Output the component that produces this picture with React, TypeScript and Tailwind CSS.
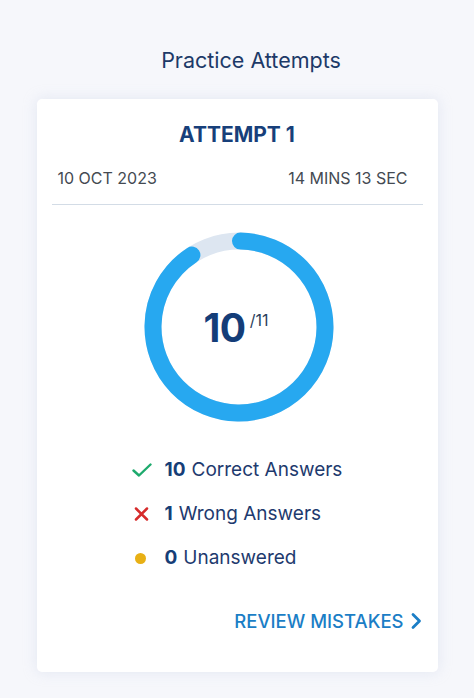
import React from 'react';

const font = { fontFamily: 'Inter, "Noto Sans", sans-serif' };

function ScoreRing({ score, total }: { score: number; total: number }) {
  const r = 86;
  const c = 2 * Math.PI * r;
  const filled = (score / total) * c;
  return (
    <div className="relative w-[192px] h-[192px]">
      <svg width="192" height="192" viewBox="0 0 192 192">
        <circle cx="96" cy="96" r={r} fill="none" stroke="#dde6f1" strokeWidth="17" />
        <circle
          cx="96"
          cy="96"
          r={r}
          fill="none"
          stroke="#27a8f0"
          strokeWidth="17"
          strokeLinecap="round"
          strokeDasharray={`${filled - 3} ${c}`}
          transform="rotate(-89 96 96)"
        />
      </svg>
      <div className="absolute inset-0 flex items-center justify-center pr-[6px]">
        <span className="text-[39px] font-bold text-[#143d78] leading-none tracking-[-0.5px]">{score}</span>
        <span className="text-[16px] text-[#2b3f5c] self-start mt-[81px] ml-[4px] leading-none">/{total}</span>
      </div>
    </div>
  );
}

export default function App() {
  return (
    <div className="min-h-[698px] bg-[#f6f7fb] flex flex-col items-center" style={font}>
      <h1 className="mt-[46px] pl-[28px] text-[21.5px] text-[#1d3a68] leading-[28px]">Practice Attempts</h1>

      <div className="mt-[25px] w-[401px] h-[573px] bg-white rounded-[5px] shadow-[0_0_14px_rgba(190,200,225,0.35)] px-[15px] flex flex-col">
        <div className="mt-[23px] text-center text-[21px] font-bold text-[#173f7a] leading-[26px]">ATTEMPT 1</div>

        <div className="mt-[20px] pl-[6px] pr-[15px] flex justify-between text-[16px] text-[#444a52] leading-[20px]">
          <span>10 OCT 2023</span>
          <span>14 MINS 13 SEC</span>
        </div>

        <div className="mt-[16px] h-px bg-[#d3dce6]" />

        <div className="mt-[26px] flex justify-center pl-[4px]">
          <ScoreRing score={10} total={11} />
        </div>

        <div className="mt-[35px] flex flex-col gap-[20px] pl-[80px] text-[19px] text-[#1e3a6e] leading-[24px]">
          <div className="flex items-center">
            <svg width="20" height="16" viewBox="0 0 20 16" className="mr-[13px]">
              <path d="M1.5 8.5 L7 13.5 L18.5 2.5" fill="none" stroke="#1eaa6d" strokeWidth="2.4" strokeLinecap="round" strokeLinejoin="round" />
            </svg>
            <span className="font-bold text-[#163e77] mr-[6px]">10</span>
            <span>Correct Answers</span>
          </div>
          <div className="flex items-center">
            <svg width="20" height="16" viewBox="0 0 20 16" className="mr-[13px]">
              <path d="M4 2.5 L15 13.5 M15 2.5 L4 13.5" fill="none" stroke="#d62b2b" strokeWidth="2.5" strokeLinecap="round" />
            </svg>
            <span className="font-bold text-[#163e77] mr-[6px]">1</span>
            <span>Wrong Answers</span>
          </div>
          <div className="flex items-center">
            <span className="w-[20px] mr-[13px] flex justify-start pl-[3px]">
              <span className="w-[11px] h-[11px] rounded-full bg-[#e8b015]" />
            </span>
            <span className="font-bold text-[#163e77] mr-[6px]">0</span>
            <span>Unanswered</span>
          </div>
        </div>

        <div className="mt-[39px] flex justify-end items-center text-[18.5px] font-medium text-[#1b7ec6] leading-[24px]">
          <span>REVIEW MISTAKES</span>
          <svg width="14" height="18" viewBox="0 0 14 18" className="ml-[5px]">
            <path d="M4 2.5 L10.5 9 L4 15.5" fill="none" stroke="#1b7ec6" strokeWidth="2.8" strokeLinecap="round" strokeLinejoin="round" />
          </svg>
        </div>
      </div>
    </div>
  );
}
